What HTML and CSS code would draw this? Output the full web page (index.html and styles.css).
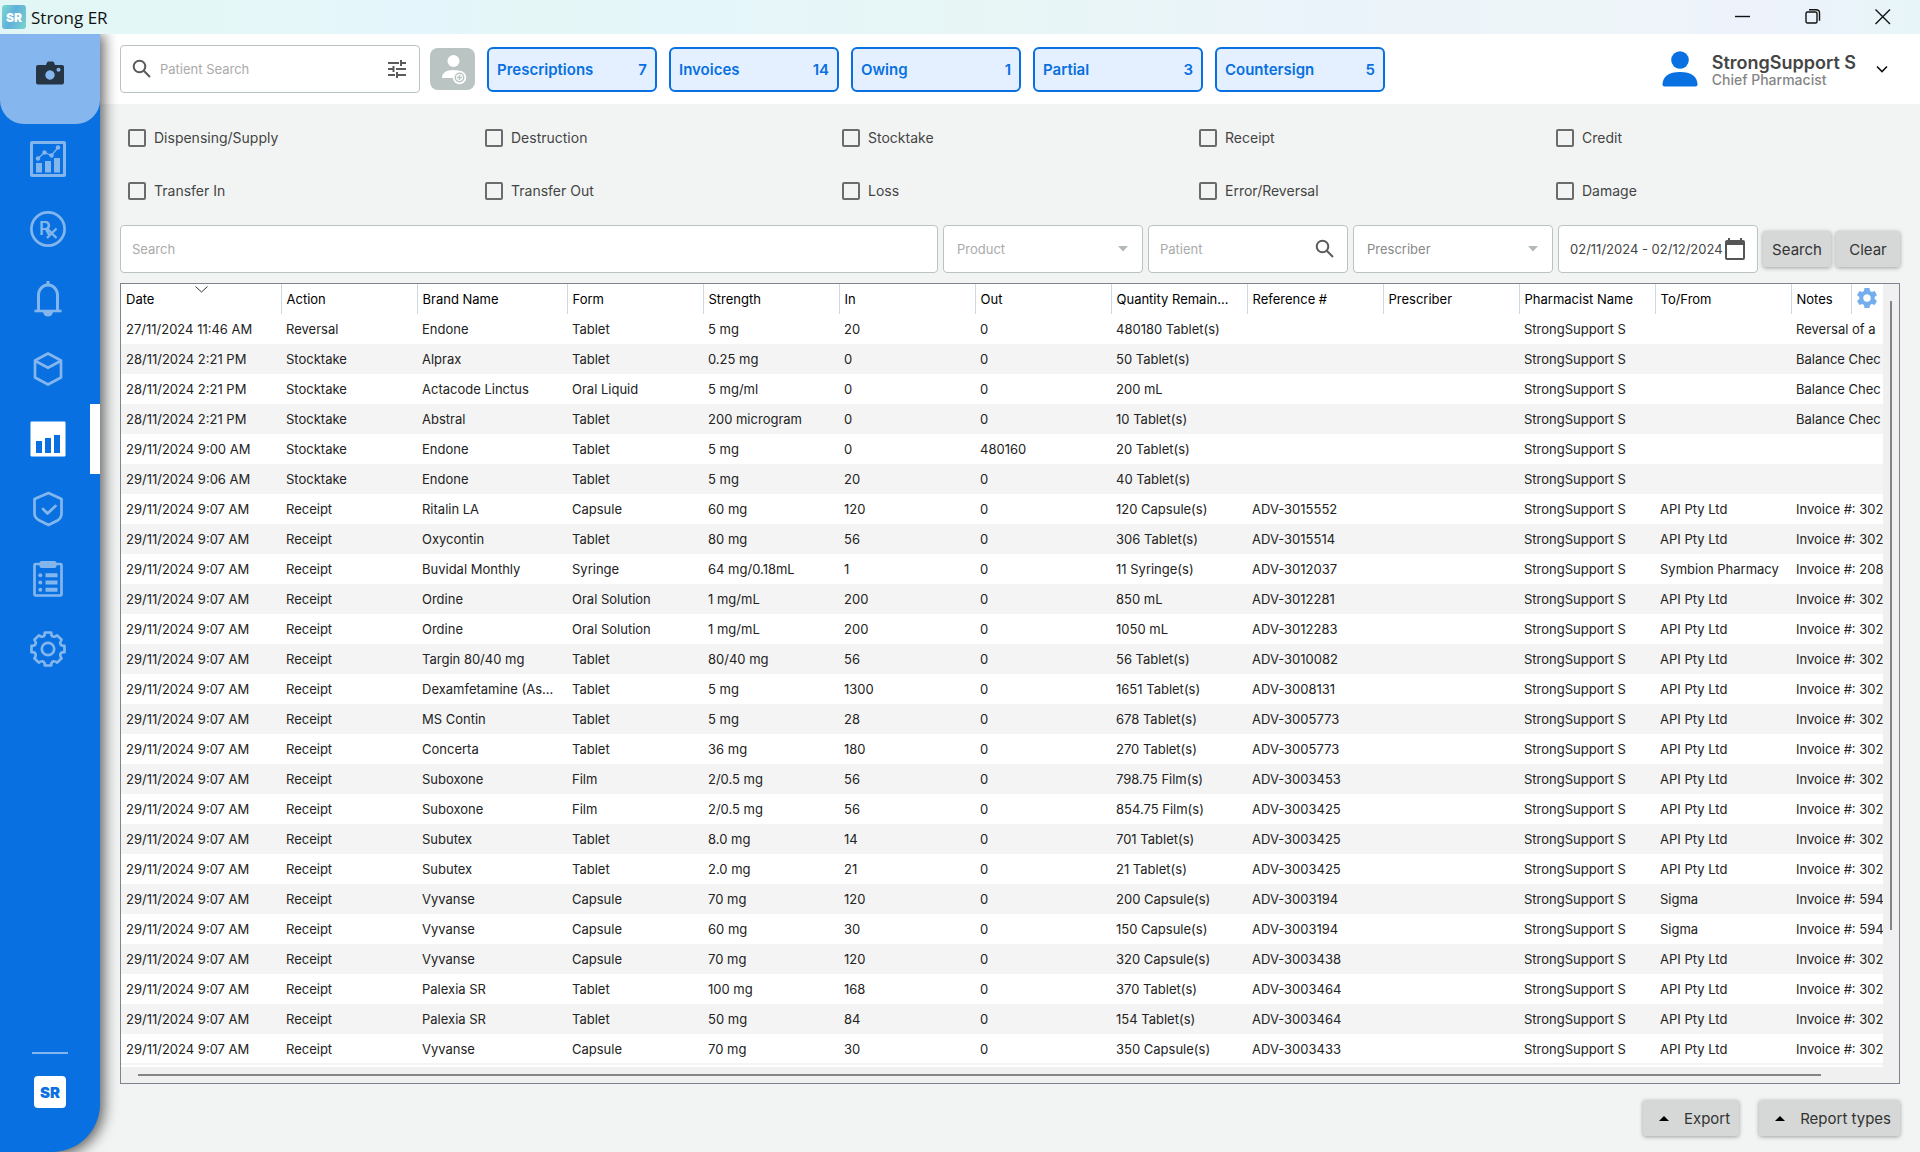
FILE: index.html
```html
<!DOCTYPE html>
<html lang="en">
<head>
    <meta charset="UTF-8">
    <meta name="viewport" content="width=device-width, initial-scale=1.0">
    <title>Strong ER</title>
    <link rel="stylesheet" href="styles.css">
</head>
<body>
    <div class="titlebar">
        <span class="app-logo">SR</span>
        <span class="app-title">Strong ER</span>
        <div class="window-buttons">
            <button aria-label="Minimize"><svg width="16" height="16" viewBox="0 0 16 16"><path d="M0 7.5h15"/></svg></button>
            <button aria-label="Restore"><svg width="16" height="16" viewBox="0 0 16 16"><rect x="1" y="3" width="11" height="11" rx="1.5"/><path d="M4 .7h7q3.500 0 3.500 3v8"/></svg></button>
            <button aria-label="Close"><svg width="16" height="16" viewBox="0 0 16 16"><path d="M.5 .5l14.500 14.500M15 .5L.5 15"/></svg></button>
        </div>
    </div>

    <div class="app">
        <nav class="sidebar">
            <button class="camera" aria-label="Camera">
                <svg width="28" height="24" viewBox="0 0 28 24"><path fill="#263544" fill-rule="evenodd" d="M2 4h8l1-2.500Q11.500.5 12.500.5h4q1 0 1.500 1L19 4h7q2 0 2 2v15.500q0 2-2 2H2q-2 0-2-2V6q0-2 2-2zM14 9.300a4.700 4.700 0 1 0 .01 0zM22.500 6.800a2 2 0 1 0 .01 0z"/></svg>
            </button>
            <a class="nav-item" href="#" aria-label="Dashboard">
                <svg width="36" height="36" viewBox="0 0 36 36"><rect x="1.500" y="1.500" width="33" height="33" rx=".5" fill="none" stroke="#84b6ee" stroke-width="3"/><g fill="#84b6ee"><path d="M6 22h6v9.500H6zM15 20h6v11.500h-6zM24 17h6v14.500h-6z"/><circle cx="8" cy="17.500" r="2.200"/><circle cx="14.500" cy="11.500" r="2.200"/><circle cx="21.500" cy="14.500" r="2.200"/><circle cx="28" cy="6.500" r="2.200"/></g><path d="M8 17.500l6.500-6 7 3 6.500-8" fill="none" stroke="#84b6ee" stroke-width="1.300"/></svg>
            </a>
            <a class="nav-item" href="#" aria-label="Prescriptions">
                <svg width="36" height="36" viewBox="0 0 36 36"><circle cx="18" cy="18" r="16.600" fill="none" stroke="#84b6ee" stroke-width="2.700"/><text class="rx" x="9" y="24">R</text><path d="M17 27l9.500-9.500M17.500 18l9 9" stroke="#84b6ee" stroke-width="2.400" fill="none"/></svg>
            </a>
            <a class="nav-item" href="#" aria-label="Alerts">
                <svg width="36" height="36" viewBox="0 0 36 36"><g fill="none" stroke="#84b6ee" stroke-width="3"><path d="M8.500 29V14a9.500 10 0 0 1 19 0v15"/><path d="M4.500 30h27" stroke-width="2.600"/><path d="M18 0v4"/></g><path fill="#84b6ee" d="M13 31h10q-1 4.500-5 4.500T13 31z"/></svg>
            </a>
            <a class="nav-item" href="#" aria-label="Stock">
                <svg width="36" height="36" viewBox="0 0 36 36"><g fill="none" stroke="#84b6ee" stroke-width="2.700" stroke-linejoin="round"><path d="M18 2.500l13 7v17l-13 7-13-7v-17z"/><path d="M5 9.800l13 7 13-7"/></g></svg>
            </a>
            <a class="nav-item active" href="#" aria-label="Reports">
                <svg width="36" height="36" viewBox="0 0 36 36"><rect x=".5" y=".5" width="35" height="35" rx="1" fill="#fff"/><path fill="#0870e0" d="M6 20h6v12H6zM15 17h6v15h-6zM24 14h6v18h-6z"/></svg>
            </a>
            <a class="nav-item" href="#" aria-label="Compliance">
                <svg width="36" height="36" viewBox="0 0 36 36"><g fill="none" stroke="#84b6ee" stroke-width="2.700" stroke-linejoin="round"><path d="M18.500 2l13 6v14.500q0 4.500-4 7l-9 4.500-9-4.500Q4.500 27 4.500 22.500V8z"/><path d="M13 18l4.500 4.500 8-7.500" stroke-linecap="round"/></g></svg>
            </a>
            <a class="nav-item" href="#" aria-label="Checklists">
                <svg width="36" height="36" viewBox="0 0 36 36"><rect x="4.500" y="3" width="27" height="31.500" rx="1" fill="none" stroke="#84b6ee" stroke-width="2.700"/><g fill="#84b6ee"><rect x="9.500" y="0" width="17" height="7" rx="2"/><circle cx="10.300" cy="14.200" r="2"/><circle cx="10.300" cy="21.500" r="2"/><circle cx="10.300" cy="28.700" r="2"/><path d="M15.500 12.200h12v4h-12zM15.500 19.500h12v4h-12zM15.500 26.700h12v4h-12z"/></g></svg>
            </a>
            <a class="nav-item" href="#" aria-label="Settings">
                <svg width="36" height="36" viewBox="-18 -18 36 36"><g fill="none" stroke="#84b6ee" stroke-width="2.700" stroke-linejoin="round"><path d="M16.500-3.200V3.200Q13 3 12.300 5.400 12 7 13.600 9.200L9.200 13.600Q7 12 5.400 12.300 3 13 3.200 16.500H-3.200Q-3 13-5.400 12.300-7 12-9.200 13.600L-13.600 9.200Q-12 7-12.300 5.400-13 3-16.500 3.200V-3.200Q-13-3-12.300-5.400-12-7-13.600-9.200L-9.200-13.600Q-7-12-5.400-12.300-3-13-3.200-16.500H3.200Q3-13 5.400-12.300 7-12 9.200-13.600L13.600-9.200Q12-7 12.300-5.400 13-3 16.500-3.200z"/><circle r="6.200"/></g></svg>
            </a>
            <div class="sidebar-foot">
                <hr>
                <span class="brand">SR</span>
            </div>
        </nav>

        <div class="content">
            <header class="topbar">
                <div class="field patient-search">
                    <svg class="search-icon" width="20" height="20" viewBox="0 0 20 20"><circle cx="7.500" cy="7.500" r="5.800"/><path d="M11.800 11.800l6.200 6.200"/></svg>
                    <input type="text" placeholder="Patient Search" aria-label="Patient Search">
                    <svg class="tune-icon" width="20" height="20" viewBox="0 0 20 20"><path d="M1 4h11M15 4h4M14 1v6M1 10h5M6.500 7v6M9 10h10M1 16h7M10 13v6M10 16h9"/></svg>
                </div>
                <button class="add-patient" aria-label="Add patient">
                    <svg width="45" height="42" viewBox="0 0 45 42"><circle cx="23.500" cy="13" r="6" fill="#fff"/><path fill="#fff" d="M12 30q0-8 11.500-8T35 30z"/><circle cx="29.500" cy="29.500" r="6.700" fill="#fff"/><circle cx="29.500" cy="29.500" r="4.200" fill="none" stroke="#bac4c2" stroke-width="1.500"/><path d="M27 29.500h5M29.500 27v5" stroke="#bac4c2" stroke-width="1.500"/></svg>
                </button>
                <div class="counters">
                    <button class="counter"><span>Prescriptions</span><span>7</span></button>
                    <button class="counter"><span>Invoices</span><span>14</span></button>
                    <button class="counter"><span>Owing</span><span>1</span></button>
                    <button class="counter"><span>Partial</span><span>3</span></button>
                    <button class="counter"><span>Countersign</span><span>5</span></button>
                </div>
                <button class="user">
                    <svg width="36" height="36" viewBox="0 0 36 36"><circle cx="18" cy="9" r="8.800" fill="#0870e0"/><path fill="#0870e0" d="M2.500 35.500Q.5 35.500.5 33.500 1 21 18 21t17.500 12.500q0 2-2 2z"/></svg>
                    <span class="user-text"><span class="user-name">StrongSupport S</span><span class="user-role">Chief Pharmacist</span></span>
                    <svg width="12" height="8" viewBox="0 0 12 8"><path d="M1 1.500l5 5 5-5" fill="none" stroke="#111" stroke-width="1.600"/></svg>
                </button>
            </header>

            <main>
                <div class="types">
                    <label><input type="checkbox">Dispensing/Supply</label>
                    <label><input type="checkbox">Destruction</label>
                    <label><input type="checkbox">Stocktake</label>
                    <label><input type="checkbox">Receipt</label>
                    <label><input type="checkbox">Credit</label>
                    <label><input type="checkbox">Transfer In</label>
                    <label><input type="checkbox">Transfer Out</label>
                    <label><input type="checkbox">Loss</label>
                    <label><input type="checkbox">Error/Reversal</label>
                    <label><input type="checkbox">Damage</label>
                </div>

                <div class="filters">
                    <div class="field wide"><input type="text" placeholder="Search" aria-label="Search"></div>
                    <div class="field">
                        <select aria-label="Product"><option>Product</option></select>
                        <svg class="arrow" width="10" height="6" viewBox="0 0 10 6"><path d="M0 0h10L5 5.500z"/></svg>
                    </div>
                    <div class="field">
                        <input type="text" placeholder="Patient" aria-label="Patient">
                        <svg class="search-icon" width="20" height="20" viewBox="0 0 20 20"><circle cx="7.500" cy="7.500" r="5.800"/><path d="M11.800 11.800l6.200 6.200"/></svg>
                    </div>
                    <div class="field">
                        <select class="dark" aria-label="Prescriber"><option>Prescriber</option></select>
                        <svg class="arrow" width="10" height="6" viewBox="0 0 10 6"><path d="M0 0h10L5 5.500z"/></svg>
                    </div>
                    <div class="field">
                        <input type="text" value="02/11/2024 - 02/12/2024" aria-label="Date range">
                        <svg width="20" height="22" viewBox="0 0 20 22"><path fill="#555" fill-rule="evenodd" d="M3 0h2v2h10V0h2v2h1q2 0 2 2v16q0 2-2 2H2q-2 0-2-2V4q0-2 2-2h1zM2 7v13h16V7z"/></svg>
                    </div>
                    <button class="btn search">Search</button>
                    <button class="btn clear">Clear</button>
                </div>

                <div class="grid-box">
                    <div class="grid-view">
                        <table>
                            <colgroup>
                                <col class="c-date"><col><col class="c-brand"><col><col><col><col><col><col><col><col><col><col class="c-notes"><col class="c-gear">
                            </colgroup>
                            <thead>
                                <tr>
                                    <th class="sorted">Date<svg class="sort" width="13" height="7" viewBox="0 0 13 7"><path d="M.5.5l6 5.500 6-5.500"/></svg></th><th>Action</th><th>Brand Name</th><th>Form</th><th>Strength</th><th>In</th><th>Out</th><th>Quantity Remain...</th><th>Reference #</th><th>Prescriber</th><th>Pharmacist Name</th><th>To/From</th><th>Notes</th>
                                    <th class="gear"><button aria-label="Columns"><svg width="20" height="20" viewBox="0 0 20 20"><path fill="#74aeed" fill-rule="evenodd" d="M7.500 0h5l.6 3 1.700 1 2.800-1L20 7.200 17.700 9.100v1.900L20 12.900l-2.400 4.100-2.800-1-1.700 1-.6 3h-5l-.6-3-1.700-1-2.800 1L0 12.900 2.300 11V9.100L0 7.200 2.400 3l2.800 1 1.700-1zM10 6.200a3.800 3.800 0 1 0 .01 0z"/></svg></button></th>
                                </tr>
                            </thead>
                            <tbody>
                                <tr><td>27/11/2024 11:46 AM</td><td>Reversal</td><td>Endone</td><td>Tablet</td><td>5 mg</td><td>20</td><td>0</td><td>480180 Tablet(s)</td><td></td><td></td><td>StrongSupport S</td><td></td><td colspan="2">Reversal of a</td></tr>
                                <tr><td>28/11/2024 2:21 PM</td><td>Stocktake</td><td>Alprax</td><td>Tablet</td><td>0.25 mg</td><td>0</td><td>0</td><td>50 Tablet(s)</td><td></td><td></td><td>StrongSupport S</td><td></td><td colspan="2">Balance Chec</td></tr>
                                <tr><td>28/11/2024 2:21 PM</td><td>Stocktake</td><td>Actacode Linctus</td><td>Oral Liquid</td><td>5 mg/ml</td><td>0</td><td>0</td><td>200 mL</td><td></td><td></td><td>StrongSupport S</td><td></td><td colspan="2">Balance Chec</td></tr>
                                <tr><td>28/11/2024 2:21 PM</td><td>Stocktake</td><td>Abstral</td><td>Tablet</td><td>200 microgram</td><td>0</td><td>0</td><td>10 Tablet(s)</td><td></td><td></td><td>StrongSupport S</td><td></td><td colspan="2">Balance Chec</td></tr>
                                <tr><td>29/11/2024 9:00 AM</td><td>Stocktake</td><td>Endone</td><td>Tablet</td><td>5 mg</td><td>0</td><td>480160</td><td>20 Tablet(s)</td><td></td><td></td><td>StrongSupport S</td><td></td><td colspan="2"></td></tr>
                                <tr><td>29/11/2024 9:06 AM</td><td>Stocktake</td><td>Endone</td><td>Tablet</td><td>5 mg</td><td>20</td><td>0</td><td>40 Tablet(s)</td><td></td><td></td><td>StrongSupport S</td><td></td><td colspan="2"></td></tr>
                                <tr><td>29/11/2024 9:07 AM</td><td>Receipt</td><td>Ritalin LA</td><td>Capsule</td><td>60 mg</td><td>120</td><td>0</td><td>120 Capsule(s)</td><td>ADV-3015552</td><td></td><td>StrongSupport S</td><td>API Pty Ltd</td><td colspan="2">Invoice #: 302</td></tr>
                                <tr><td>29/11/2024 9:07 AM</td><td>Receipt</td><td>Oxycontin</td><td>Tablet</td><td>80 mg</td><td>56</td><td>0</td><td>306 Tablet(s)</td><td>ADV-3015514</td><td></td><td>StrongSupport S</td><td>API Pty Ltd</td><td colspan="2">Invoice #: 302</td></tr>
                                <tr><td>29/11/2024 9:07 AM</td><td>Receipt</td><td>Buvidal Monthly</td><td>Syringe</td><td>64 mg/0.18mL</td><td>1</td><td>0</td><td>11 Syringe(s)</td><td>ADV-3012037</td><td></td><td>StrongSupport S</td><td>Symbion Pharmacy</td><td colspan="2">Invoice #: 208</td></tr>
                                <tr><td>29/11/2024 9:07 AM</td><td>Receipt</td><td>Ordine</td><td>Oral Solution</td><td>1 mg/mL</td><td>200</td><td>0</td><td>850 mL</td><td>ADV-3012281</td><td></td><td>StrongSupport S</td><td>API Pty Ltd</td><td colspan="2">Invoice #: 302</td></tr>
                                <tr><td>29/11/2024 9:07 AM</td><td>Receipt</td><td>Ordine</td><td>Oral Solution</td><td>1 mg/mL</td><td>200</td><td>0</td><td>1050 mL</td><td>ADV-3012283</td><td></td><td>StrongSupport S</td><td>API Pty Ltd</td><td colspan="2">Invoice #: 302</td></tr>
                                <tr><td>29/11/2024 9:07 AM</td><td>Receipt</td><td>Targin 80/40 mg</td><td>Tablet</td><td>80/40 mg</td><td>56</td><td>0</td><td>56 Tablet(s)</td><td>ADV-3010082</td><td></td><td>StrongSupport S</td><td>API Pty Ltd</td><td colspan="2">Invoice #: 302</td></tr>
                                <tr><td>29/11/2024 9:07 AM</td><td>Receipt</td><td>Dexamfetamine (As...</td><td>Tablet</td><td>5 mg</td><td>1300</td><td>0</td><td>1651 Tablet(s)</td><td>ADV-3008131</td><td></td><td>StrongSupport S</td><td>API Pty Ltd</td><td colspan="2">Invoice #: 302</td></tr>
                                <tr><td>29/11/2024 9:07 AM</td><td>Receipt</td><td>MS Contin</td><td>Tablet</td><td>5 mg</td><td>28</td><td>0</td><td>678 Tablet(s)</td><td>ADV-3005773</td><td></td><td>StrongSupport S</td><td>API Pty Ltd</td><td colspan="2">Invoice #: 302</td></tr>
                                <tr><td>29/11/2024 9:07 AM</td><td>Receipt</td><td>Concerta</td><td>Tablet</td><td>36 mg</td><td>180</td><td>0</td><td>270 Tablet(s)</td><td>ADV-3005773</td><td></td><td>StrongSupport S</td><td>API Pty Ltd</td><td colspan="2">Invoice #: 302</td></tr>
                                <tr><td>29/11/2024 9:07 AM</td><td>Receipt</td><td>Suboxone</td><td>Film</td><td>2/0.5 mg</td><td>56</td><td>0</td><td>798.75 Film(s)</td><td>ADV-3003453</td><td></td><td>StrongSupport S</td><td>API Pty Ltd</td><td colspan="2">Invoice #: 302</td></tr>
                                <tr><td>29/11/2024 9:07 AM</td><td>Receipt</td><td>Suboxone</td><td>Film</td><td>2/0.5 mg</td><td>56</td><td>0</td><td>854.75 Film(s)</td><td>ADV-3003425</td><td></td><td>StrongSupport S</td><td>API Pty Ltd</td><td colspan="2">Invoice #: 302</td></tr>
                                <tr><td>29/11/2024 9:07 AM</td><td>Receipt</td><td>Subutex</td><td>Tablet</td><td>8.0 mg</td><td>14</td><td>0</td><td>701 Tablet(s)</td><td>ADV-3003425</td><td></td><td>StrongSupport S</td><td>API Pty Ltd</td><td colspan="2">Invoice #: 302</td></tr>
                                <tr><td>29/11/2024 9:07 AM</td><td>Receipt</td><td>Subutex</td><td>Tablet</td><td>2.0 mg</td><td>21</td><td>0</td><td>21 Tablet(s)</td><td>ADV-3003425</td><td></td><td>StrongSupport S</td><td>API Pty Ltd</td><td colspan="2">Invoice #: 302</td></tr>
                                <tr><td>29/11/2024 9:07 AM</td><td>Receipt</td><td>Vyvanse</td><td>Capsule</td><td>70 mg</td><td>120</td><td>0</td><td>200 Capsule(s)</td><td>ADV-3003194</td><td></td><td>StrongSupport S</td><td>Sigma</td><td colspan="2">Invoice #: 594</td></tr>
                                <tr><td>29/11/2024 9:07 AM</td><td>Receipt</td><td>Vyvanse</td><td>Capsule</td><td>60 mg</td><td>30</td><td>0</td><td>150 Capsule(s)</td><td>ADV-3003194</td><td></td><td>StrongSupport S</td><td>Sigma</td><td colspan="2">Invoice #: 594</td></tr>
                                <tr><td>29/11/2024 9:07 AM</td><td>Receipt</td><td>Vyvanse</td><td>Capsule</td><td>70 mg</td><td>120</td><td>0</td><td>320 Capsule(s)</td><td>ADV-3003438</td><td></td><td>StrongSupport S</td><td>API Pty Ltd</td><td colspan="2">Invoice #: 302</td></tr>
                                <tr><td>29/11/2024 9:07 AM</td><td>Receipt</td><td>Palexia SR</td><td>Tablet</td><td>100 mg</td><td>168</td><td>0</td><td>370 Tablet(s)</td><td>ADV-3003464</td><td></td><td>StrongSupport S</td><td>API Pty Ltd</td><td colspan="2">Invoice #: 302</td></tr>
                                <tr><td>29/11/2024 9:07 AM</td><td>Receipt</td><td>Palexia SR</td><td>Tablet</td><td>50 mg</td><td>84</td><td>0</td><td>154 Tablet(s)</td><td>ADV-3003464</td><td></td><td>StrongSupport S</td><td>API Pty Ltd</td><td colspan="2">Invoice #: 302</td></tr>
                                <tr><td>29/11/2024 9:07 AM</td><td>Receipt</td><td>Vyvanse</td><td>Capsule</td><td>70 mg</td><td>30</td><td>0</td><td>350 Capsule(s)</td><td>ADV-3003433</td><td></td><td>StrongSupport S</td><td>API Pty Ltd</td><td colspan="2">Invoice #: 302</td></tr>
                            </tbody>
                        </table>
                    </div>
                    <div class="scroll-y"><div class="thumb"></div></div>
                    <div class="scroll-x"><div class="thumb"></div></div>
                </div>

                <div class="actions">
                    <button class="btn menu"><svg width="10" height="5" viewBox="0 0 10 5"><path d="M0 5l5-5 5 5z"/></svg>Export</button>
                    <button class="btn menu"><svg width="10" height="5" viewBox="0 0 10 5"><path d="M0 5l5-5 5 5z"/></svg>Report types</button>
                </div>
            </main>
        </div>
    </div>
</body>
</html>
```
FILE: styles.css
```css
* {
    box-sizing: border-box;
}

body {
    margin: 0;
    min-height: 100vh;
    display: flex;
    flex-direction: column;
    font-family: Inter, sans-serif;
    font-size: 13px;
    color: #222;
    background-color: #f2f4f3;
}

button, input, select {
    font: inherit;
    color: inherit;
}

button {
    border: none;
    padding: 0;
    background: none;
    cursor: pointer;
}

svg {
    flex: none;
    display: block;
}

/* window title bar */
.titlebar {
    height: 34px;
    display: flex;
    align-items: center;
    padding: 0 2px;
    position: relative;
    z-index: 2;
    background: linear-gradient(90deg, #e2f7f5, #e5f7f8 15%, #e4f5fc 22%, #e4f6f5 28%, #e5f6fb 36%, #e7f6f5 50%, #ebf3fa 70%, #eef5f8 82%, #edf2fb 92%, #e7f5f8);
}

.app-logo {
    width: 24px;
    height: 24px;
    border-radius: 3px;
    display: grid;
    place-items: center;
    font-size: 12px;
    font-weight: 900;
    color: #fff;
    background: linear-gradient(115deg, #7fd8cf, #5fb0dc 45%, #7cd4c8);
}

.app-title {
    margin-left: 5px;
    font-family: "Open Sans", sans-serif;
    font-size: 17px;
    color: #111;
}

.window-buttons {
    margin-left: auto;
    display: flex;
}

.window-buttons button {
    width: 70px;
    height: 34px;
    display: grid;
    place-items: center;
}

.window-buttons svg {
    fill: none;
    stroke: #111;
    stroke-width: 1.4;
}

.app {
    flex: 1;
    display: flex;
}

/* sidebar */
.sidebar {
    width: 100px;
    flex: none;
    display: flex;
    flex-direction: column;
    background-color: #0870e0;
    border-radius: 0 0 48px 0;
    box-shadow: 2px 2px 14px 2px rgba(0, 0, 0, 0.6);
    z-index: 1;
}

.camera {
    height: 90px;
    border-radius: 0 0 24px 24px;
    background-color: #85b6ee;
    display: grid;
    place-items: center;
    padding-bottom: 12px;
}

.nav-item {
    height: 70px;
    display: flex;
    align-items: center;
    padding-left: 30px;
}

.nav-item.active {
    border-right: 10px solid #fff;
}

.rx {
    font-size: 18px;
    font-weight: 600;
    fill: #84b6ee;
}

.sidebar-foot {
    margin-top: auto;
    padding-bottom: 44px;
    display: flex;
    flex-direction: column;
    align-items: center;
    gap: 22px;
}

.sidebar-foot hr {
    width: 36px;
    height: 2px;
    margin: 0;
    border: none;
    background-color: #84b6ee;
}

.brand {
    width: 32px;
    height: 32px;
    border-radius: 4px;
    display: grid;
    place-items: center;
    background-color: #fff;
    color: #0870e0;
    font-size: 15px;
    font-weight: 900;
}

.content {
    flex: 1;
    min-width: 0;
    display: flex;
    flex-direction: column;
}

/* top bar */
.topbar {
    height: 70px;
    display: flex;
    align-items: center;
    padding: 0 32px 0 20px;
    background-color: #fff;
}

.field {
    width: 200px;
    height: 48px;
    display: flex;
    align-items: center;
    padding: 0 12px 0 11px;
    border: 1px solid #b9c4c1;
    border-radius: 4px;
    background-color: #fff;
}

.field input, .field select {
    flex: 1;
    min-width: 0;
    padding: 0;
    border: none;
    outline: none;
    background: none;
    appearance: none;
    color: #444;
}

.field select {
    color: #aaa;
    padding-left: 2px;
}

.field select.dark {
    color: #888;
}

.field input::placeholder {
    color: #aaa;
    opacity: 1;
}

.patient-search {
    width: 300px;
}

.patient-search input {
    margin-left: 8px;
}

.search-icon, .tune-icon {
    fill: none;
    stroke: #5a5a5a;
    stroke-width: 2;
}

.add-patient {
    margin-left: 10px;
    border-radius: 8px;
    background-color: #bac4c2;
}

.counters {
    display: flex;
    gap: 12px;
    margin-left: 12px;
}

.counter {
    width: 170px;
    height: 45px;
    display: flex;
    justify-content: space-between;
    align-items: center;
    padding: 0 8px;
    border: 2px solid #0870e0;
    border-radius: 6px;
    background-color: #e4f0ff;
    color: #0870e0;
    font-size: 15px;
    font-weight: 600;
}

.user {
    margin-left: auto;
    display: flex;
    align-items: center;
    text-align: left;
}

.user-text {
    display: flex;
    flex-direction: column;
    margin: 0 20px 0 14px;
    padding-top: 3px;
}

.user-name {
    font-size: 18px;
    line-height: 18px;
    font-weight: 600;
    color: #454545;
}

.user-role {
    font-size: 14px;
    line-height: 16px;
    font-weight: 500;
    color: #858585;
}

main {
    flex: 1;
    display: flex;
    flex-direction: column;
    padding: 7px 20px 16px;
}

.types {
    display: grid;
    grid-template-columns: repeat(5, 1fr);
    margin-right: -5px;
    padding-bottom: 8px;
}

.types label {
    height: 53px;
    display: flex;
    align-items: center;
    font-size: 14px;
    color: #444;
}

.types input {
    appearance: none;
    width: 18px;
    height: 18px;
    margin: 0 8px;
    border: 2px solid #6b6b6b;
    border-radius: 2px;
}

.filters {
    display: flex;
    align-items: center;
    gap: 5px;
    margin-bottom: 10px;
}

.field.wide {
    flex: 1;
}

.arrow {
    margin-right: 2px;
    fill: #b0b9b7;
}

.btn {
    height: 36px;
    border-radius: 3px;
    background-color: #d6d8d7;
    box-shadow: 0 1px 4px rgba(0, 0, 0, 0.35);
    font-size: 15px;
    color: #333;
}

.btn.search {
    width: 68px;
}

.btn.clear {
    width: 64px;
}

/* transaction grid */
.grid-box {
    flex: 1;
    display: grid;
    grid-template-columns: 1fr 16px;
    grid-template-rows: 1fr 16px;
    border: 1px solid #80838f;
    background-color: #f0f0f0;
}

.grid-view {
    min-width: 0;
    overflow: hidden;
    background-color: #fff;
}

table {
    width: 100%;
    table-layout: fixed;
    border-collapse: collapse;
    border-bottom: 2px solid #f4f4f4;
}

.c-date {
    width: 160px;
}

.c-brand {
    width: 150px;
}

.c-notes {
    width: 60px;
}

.c-gear {
    width: 32px;
}

th, td {
    height: 30px;
    padding: 0 0 0 5px;
    text-align: left;
    white-space: nowrap;
    overflow: hidden;
}

th {
    font-weight: 400;
    color: #000;
    border-right: 1px solid #cdd9e3;
}

th.sorted {
    position: relative;
}

.sort {
    position: absolute;
    top: 2px;
    left: 50%;
    margin-left: -6px;
    fill: none;
    stroke: #333;
}

th.gear {
    border-right: none;
}

tbody tr:nth-child(even) {
    background-color: #f4f4f4;
}

.scroll-y {
    display: flex;
    justify-content: center;
    padding: 17px 0 137px;
}

.scroll-y .thumb {
    width: 2px;
    background-color: #858585;
}

.scroll-x {
    display: flex;
    align-items: center;
    padding: 0 62px 0 17px;
}

.scroll-x .thumb {
    flex: 1;
    height: 2px;
    background-color: #858585;
}

.actions {
    display: flex;
    justify-content: flex-end;
    gap: 20px;
    margin-top: 16px;
}

.btn.menu {
    display: flex;
    align-items: center;
    gap: 15px;
    padding: 0 9px 0 16px;
}
```
